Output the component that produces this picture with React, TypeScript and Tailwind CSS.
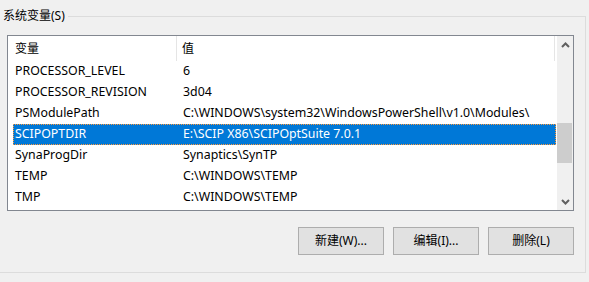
import React from 'react'

const rows: [string, string][] = [
  ['PROCESSOR_LEVEL', '6'],
  ['PROCESSOR_REVISION', '3d04'],
  ['PSModulePath', 'C:\\WINDOWS\\system32\\WindowsPowerShell\\v1.0\\Modules\\'],
  ['SCIPOPTDIR', 'E:\\SCIP X86\\SCIPOptSuite 7.0.1'],
  ['SynaProgDir', 'Synaptics\\SynTP'],
  ['TEMP', 'C:\\WINDOWS\\TEMP'],
  ['TMP', 'C:\\WINDOWS\\TEMP'],
]

const SELECTED = 3

function Chevron({ down }: { down?: boolean }) {
  return (
    <svg width="9" height="6" viewBox="0 0 9 6" className={down ? 'rotate-180' : ''}>
      <path d="M1 5 L4.5 1.5 L8 5" fill="none" stroke="#606060" strokeWidth="2" />
    </svg>
  )
}

function WinButton({ label }: { label: string }) {
  return (
    <button className="w-[86px] h-[28px] bg-[#e1e1e1] border border-[#adadad] text-[12px] text-black flex items-center justify-center">
      {label}
    </button>
  )
}

export default function App() {
  return (
    <div
      className="w-[589px] h-[282px] bg-[#f0f0f0] overflow-hidden text-black"
      style={{ fontFamily: '"Noto Sans", "Noto Sans CJK SC", sans-serif' }}
    >
      <fieldset className="mt-[8px] w-[586px] h-[265px] border border-l-0 border-[#dcdcdc]">
        <legend className="pl-[3px] pr-[3px] text-[12px] leading-[16px]">系统变量(S)</legend>

        <div className="ml-[7px] mt-[11px] w-[567px] h-[176px] border border-[#828790] bg-white flex">
          <div className="w-[548px] flex flex-col">
            {/* header */}
            <div className="h-[25px] flex text-[12px]">
              <div className="w-[169px] pl-[7px] flex items-center border-r border-[#e5e5e5]">变量</div>
              <div className="w-[378px] pl-[5px] flex items-center border-r border-[#e5e5e5]">值</div>
            </div>
            {/* rows */}
            {rows.map(([name, value], i) => (
              <div
                key={name}
                className={
                  i === SELECTED
                    ? 'ml-[5px] w-[543px] h-[21px] flex items-center text-[12.35px] whitespace-nowrap bg-[#0078d7] text-white border border-dotted border-[#ff9a3c]'
                    : 'ml-[5px] w-[543px] h-[21px] flex items-center text-[12.35px] whitespace-nowrap border border-transparent'
                }
              >
                <span className="w-[169px] pl-[1px]">{name}</span>
                <span>{value}</span>
              </div>
            ))}
          </div>

          {/* scrollbar */}
          <div className="w-[17px] ml-px bg-[#f0f0f0] flex flex-col">
            <div className="h-[17px] flex items-center justify-center">
              <Chevron />
            </div>
            <div className="h-[70px]" />
            <div className="h-[40px] w-[15px] bg-[#cdcdcd]" />
            <div className="flex-1" />
            <div className="h-[17px] flex items-center justify-center">
              <Chevron down />
            </div>
          </div>
        </div>

        <div className="ml-[7px] mt-[16px] w-[567px] flex justify-end gap-[9px]">
          <WinButton label="新建(W)..." />
          <WinButton label="编辑(I)..." />
          <WinButton label="删除(L)" />
        </div>
      </fieldset>
    </div>
  )
}
